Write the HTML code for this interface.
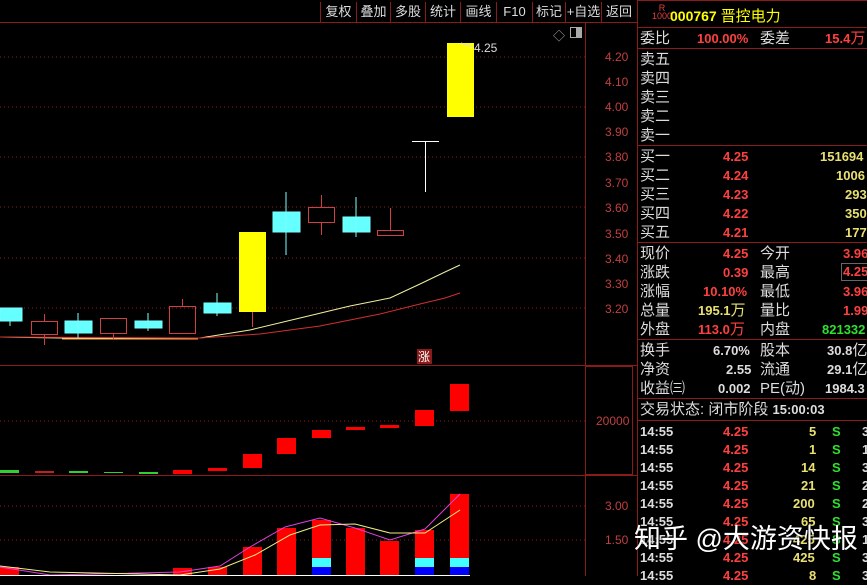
<!DOCTYPE html>
<html><head><meta charset="utf-8"><style>
*{margin:0;padding:0;box-sizing:border-box}
body{width:867px;height:576px;background:#000;overflow:hidden;position:relative;font-family:"Liberation Sans","Noto Sans CJK SC",sans-serif}
.a{position:absolute}
.tb{position:absolute;top:2px;height:20px;color:#ddd;font-size:13px;line-height:20px;text-align:center;border-left:1px solid #8b1a1a}
.r{position:absolute;left:640px;width:227px;height:19px;font-size:15px;line-height:19px;color:#ddd;white-space:nowrap}
.r span{position:absolute}
.red{color:#ff4040}.yel{color:#e8e070}.grn{color:#30e030}.wht{color:#ddd}
.b{font-weight:bold;font-size:13px}
</style></head><body>
<!-- toolbar -->
<div class="a" style="left:0;top:22px;width:637px;height:1px;background:#8b1a1a"></div>
<div class="tb" style="left:320px;width:36px">复权</div>
<div class="tb" style="left:356px;width:34px">叠加</div>
<div class="tb" style="left:390px;width:35px">多股</div>
<div class="tb" style="left:425px;width:35px">统计</div>
<div class="tb" style="left:460px;width:36px">画线</div>
<div class="tb" style="left:496px;width:36px">F10</div>
<div class="tb" style="left:532px;width:33px">标记</div>
<div class="tb" style="left:565px;width:36px">+自选</div>
<div class="tb" style="left:601px;width:35px">返回</div>
<div class="a" style="left:553px;top:27px;color:#aaa;font-size:12px">◇</div>
<div class="a" style="left:570px;top:27px;width:12px;height:11px;border:1px solid #aaa;background:linear-gradient(90deg,#000 50%,#aaa 50%)"></div>
<!-- axis borders -->
<div class="a" style="left:585px;top:22px;width:1px;height:554px;background:#8b1a1a"></div>
<div class="a" style="left:637px;top:0;width:1px;height:576px;background:#8b1a1a"></div>
<div class="a" style="left:0;top:365px;width:637px;height:1px;background:#8b1a1a"></div>
<div class="a" style="left:0;top:475px;width:637px;height:1px;background:#8b1a1a"></div>
<div class="a" style="left:585px;top:366px;width:48px;height:109px;border:1px solid #8b1a1a"></div>
<svg class="a" style="left:0;top:0" width="637" height="576">
<g stroke="#8b2020" stroke-dasharray="1,3">
<line x1="0" y1="57" x2="585" y2="57"/><line x1="0" y1="107" x2="585" y2="107"/><line x1="0" y1="157" x2="585" y2="157"/><line x1="0" y1="207" x2="585" y2="207"/><line x1="0" y1="258" x2="585" y2="258"/><line x1="0" y1="308" x2="585" y2="308"/>
<line x1="0" y1="421" x2="585" y2="421"/><line x1="0" y1="506" x2="585" y2="506"/><line x1="0" y1="540" x2="585" y2="540"/>
</g>
<g fill="#c04040" font-size="12" font-family="Liberation Sans">
<text x="605" y="61">4.20</text><text x="605" y="86">4.10</text><text x="605" y="111">4.00</text><text x="605" y="136">3.90</text><text x="605" y="161">3.80</text><text x="605" y="187">3.70</text><text x="605" y="212">3.60</text><text x="605" y="238">3.50</text><text x="605" y="263">3.40</text><text x="605" y="288">3.30</text><text x="605" y="313">3.20</text>
<text x="596" y="425">20000</text><text x="605" y="510">3.00</text><text x="605" y="544">1.50</text>
</g>
<!-- MA lines -->
<polyline fill="none" stroke="#f0f0a0" stroke-width="1" points="0,337 60,338 200,338 250,330 300,318 350,306 390,298 420,284 445,272 460,265"/>
<polyline fill="none" stroke="#d03030" stroke-width="1" points="0,337 200,338 260,334 320,326 380,314 420,304 445,298 460,293"/>
<line x1="62" y1="339" x2="198" y2="339" stroke="#ffa040"/>
<!-- candles -->
<g stroke="#7ff" fill="#6ff">
<rect x="0" y="308" width="22" height="13"/><line x1="10" y1="321" x2="10" y2="326"/>
<rect x="65" y="321" width="27" height="12"/><line x1="78" y1="313" x2="78" y2="338"/>
<rect x="135" y="321" width="27" height="7"/><line x1="148" y1="313" x2="148" y2="331"/>
<rect x="204" y="303" width="27" height="10"/><line x1="217" y1="293" x2="217" y2="316"/>
<rect x="273" y="212" width="27" height="20"/><line x1="286" y1="192" x2="286" y2="255"/>
<rect x="343" y="217" width="27" height="15"/><line x1="356" y1="197" x2="356" y2="237"/>
</g>
<g stroke="#d04040" fill="none">
<rect x="31.5" y="321.5" width="26" height="13"/><line x1="44.5" y1="314" x2="44.5" y2="321"/><line x1="44.5" y1="335" x2="44.5" y2="345"/>
<rect x="100.5" y="318.5" width="26" height="15"/><line x1="113.5" y1="334" x2="113.5" y2="339"/>
<rect x="169.5" y="306.5" width="26" height="27"/><line x1="182.5" y1="299" x2="182.5" y2="306"/>
<rect x="308.5" y="207.5" width="26" height="15"/><line x1="321.5" y1="195" x2="321.5" y2="207"/><line x1="321.5" y1="223" x2="321.5" y2="235"/>
<rect x="377.5" y="230.5" width="26" height="5"/><line x1="390.5" y1="208" x2="390.5" y2="230"/>
</g>
<rect x="239" y="232" width="27" height="80" fill="#ff0"/><line x1="252.5" y1="312" x2="252.5" y2="327" stroke="#d04040"/>
<line x1="412" y1="141.5" x2="439" y2="141.5" stroke="#fff"/><line x1="425.5" y1="141" x2="425.5" y2="192" stroke="#fff"/>
<rect x="447" y="43" width="27" height="74" fill="#ff0"/>
<line x1="461" y1="43" x2="473" y2="47" stroke="#ddd"/>
<text x="474" y="52" fill="#ddd" font-size="12" font-family="Liberation Sans">4.25</text>
<rect x="417" y="349" width="15" height="15" fill="#8b1a1a"/><text x="418" y="361" fill="#fff" font-size="12" font-family="Noto Sans CJK SC">涨</text>
<!-- volume -->
<g fill="#30d030"><rect x="0" y="470" width="19" height="3"/><rect x="69" y="471" width="19" height="2"/><rect x="104" y="472" width="19" height="1"/><rect x="139" y="472" width="19" height="2"/></g>
<g fill="#f00"><rect x="35" y="471" width="19" height="2" fill="#c02020"/><rect x="173" y="470" width="19" height="4"/><rect x="208" y="468" width="19" height="3"/>
<rect x="243" y="454" width="19" height="14"/><rect x="277" y="438" width="19" height="16"/><rect x="312" y="430" width="19" height="8"/><rect x="346" y="427" width="19" height="3"/><rect x="380" y="425" width="19" height="3"/><rect x="415" y="410" width="19" height="16"/><rect x="450" y="384" width="19" height="27"/></g>
<!-- bottom -->
<g fill="#f00"><rect x="0" y="567" width="19" height="9"/><rect x="173" y="568" width="19" height="8"/><rect x="208" y="567" width="19" height="9"/>
<rect x="243" y="547" width="19" height="29"/><rect x="277" y="528" width="19" height="48"/><rect x="312" y="520" width="19" height="56"/><rect x="346" y="528" width="19" height="48"/><rect x="380" y="541" width="19" height="35"/><rect x="415" y="530" width="19" height="46"/><rect x="450" y="494" width="19" height="82"/></g>
<g><rect x="312" y="558" width="19" height="9" fill="#4ff"/><rect x="312" y="567" width="19" height="9" fill="#00f"/><rect x="415" y="558" width="19" height="9" fill="#4ff"/><rect x="415" y="567" width="19" height="9" fill="#00f"/><rect x="450" y="558" width="19" height="9" fill="#4ff"/><rect x="450" y="567" width="19" height="9" fill="#00f"/></g>
<polyline fill="none" stroke="#e040e0" points="0,567 50,575 180,572 220,566 250,547 285,527 320,518 355,528 390,540 425,529 460,494"/>
<polyline fill="none" stroke="#f0f080" points="0,566 50,572 180,575 220,569 255,555 290,535 320,525 355,524 390,533 425,533 460,510"/>
<line x1="0" y1="575.5" x2="470" y2="575.5" stroke="#fff"/>
</svg>
<!-- right panel -->
<div class="a" style="left:637px;top:0;width:230px;height:1px;background:#8b1a1a"></div>
<div class="a" style="left:652px;top:4px;color:#e04040;font-size:9px;line-height:8px;text-align:center">R<br>1000</div>
<div class="a" style="left:670px;top:5px;color:#ff0;font-size:14px;font-weight:bold">000767 <span style="font-weight:normal;font-size:15px">晋控电力</span></div>
<div class="a" style="left:637px;top:27px;width:230px;height:1px;background:#8b1a1a"></div>
<div class="r" style="top:29px"><span>委比</span><span class="red b" style="left:57px">100.00%</span><span style="left:120px">委差</span><span class="red b" style="left:185px">15.4<span style="position:static;font-weight:normal;font-size:15px">万</span></span></div>
<div class="a" style="left:637px;top:48px;width:230px;height:1px;background:#8b1a1a"></div>
<div class="r" style="top:50px">卖五</div><div class="r" style="top:69px">卖四</div><div class="r" style="top:88px">卖三</div><div class="r" style="top:107px">卖二</div><div class="r" style="top:126px">卖一</div>
<div class="a" style="left:637px;top:145px;width:230px;height:1px;background:#8b1a1a"></div>
<div class="r" style="top:147px"><span>买一</span><span class="red b" style="left:83px">4.25</span><span class="yel b" style="left:180px">151694</span></div>
<div class="r" style="top:166px"><span>买二</span><span class="red b" style="left:83px">4.24</span><span class="yel b" style="left:196px">1006</span></div>
<div class="r" style="top:185px"><span>买三</span><span class="red b" style="left:83px">4.23</span><span class="yel b" style="left:205px">293</span></div>
<div class="r" style="top:204px"><span>买四</span><span class="red b" style="left:83px">4.22</span><span class="yel b" style="left:205px">350</span></div>
<div class="r" style="top:223px"><span>买五</span><span class="red b" style="left:83px">4.21</span><span class="yel b" style="left:205px">177</span></div>
<div class="a" style="left:637px;top:242px;width:230px;height:1px;background:#8b1a1a"></div>
<div class="r" style="top:244px"><span>现价</span><span class="red b" style="left:83px">4.25</span><span style="left:120px">今开</span><span class="red b" style="left:203px">3.96</span></div>
<div class="r" style="top:263px"><span>涨跌</span><span class="red b" style="left:83px">0.39</span><span style="left:120px">最高</span><span class="red b" style="left:201px;border:1px solid #666;padding:0 1px;line-height:16px">4.25</span></div>
<div class="r" style="top:282px"><span>涨幅</span><span class="red b" style="left:63px">10.10%</span><span style="left:120px">最低</span><span class="red b" style="left:203px">3.96</span></div>
<div class="r" style="top:301px"><span>总量</span><span class="yel b" style="left:58px">195.1<span style="position:static;font-weight:normal;font-size:15px">万</span></span><span style="left:120px">量比</span><span class="red b" style="left:203px">1.99</span></div>
<div class="r" style="top:320px"><span>外盘</span><span class="red b" style="left:58px">113.0<span style="position:static;font-weight:normal;font-size:15px">万</span></span><span style="left:120px">内盘</span><span class="grn b" style="left:182px">821332</span></div>
<div class="a" style="left:637px;top:339px;width:230px;height:1px;background:#8b1a1a"></div>
<div class="r" style="top:341px"><span>换手</span><span class="wht b" style="left:73px">6.70%</span><span style="left:120px">股本</span><span class="wht b" style="left:187px">30.8<span style="position:static;font-weight:normal;font-size:15px">亿</span></span></div>
<div class="r" style="top:360px"><span>净资</span><span class="wht b" style="left:86px">2.55</span><span style="left:120px">流通</span><span class="wht b" style="left:187px">29.1<span style="position:static;font-weight:normal;font-size:15px">亿</span></span></div>
<div class="r" style="top:379px"><span>收益㈢</span><span class="wht b" style="left:78px">0.002</span><span style="left:120px">PE(动)</span><span class="wht b" style="left:185px">1984.3</span></div>
<div class="a" style="left:637px;top:398px;width:230px;height:1px;background:#8b1a1a"></div>
<div class="r" style="top:400px">交易状态: 闭市阶段 <b style="font-size:13px">15:00:03</b></div>
<div class="a" style="left:637px;top:420px;width:230px;height:1px;background:#8b1a1a"></div>
<div class="r" style="top:422px"><span class="b">14:55</span><span class="red b" style="left:83px">4.25</span><span class="yel b" style="left:169px">5</span><span class="grn b" style="left:192px">S</span><span class="b" style="left:222px">3</span></div>
<div class="r" style="top:440px"><span class="b">14:55</span><span class="red b" style="left:83px">4.25</span><span class="yel b" style="left:169px">1</span><span class="grn b" style="left:192px">S</span><span class="b" style="left:222px">1</span></div>
<div class="r" style="top:458px"><span class="b">14:55</span><span class="red b" style="left:83px">4.25</span><span class="yel b" style="left:161px">14</span><span class="grn b" style="left:192px">S</span><span class="b" style="left:222px">3</span></div>
<div class="r" style="top:476px"><span class="b">14:55</span><span class="red b" style="left:83px">4.25</span><span class="yel b" style="left:161px">21</span><span class="grn b" style="left:192px">S</span><span class="b" style="left:222px">2</span></div>
<div class="r" style="top:494px"><span class="b">14:55</span><span class="red b" style="left:83px">4.25</span><span class="yel b" style="left:153px">200</span><span class="grn b" style="left:192px">S</span><span class="b" style="left:222px">2</span></div>
<div class="r" style="top:512px"><span class="b">14:55</span><span class="red b" style="left:83px">4.25</span><span class="yel b" style="left:161px">65</span><span class="grn b" style="left:192px">S</span><span class="b" style="left:222px">3</span></div>
<div class="r" style="top:530px"><span class="b">14:55</span><span class="red b" style="left:83px">4.25</span><span class="yel b" style="left:153px">425</span><span class="grn b" style="left:192px">S</span><span class="b" style="left:222px">1</span></div>
<div class="r" style="top:548px"><span class="b">14:55</span><span class="red b" style="left:83px">4.25</span><span class="yel b" style="left:153px">425</span><span class="grn b" style="left:192px">S</span><span class="b" style="left:222px">3</span></div>
<div class="r" style="top:566px"><span class="b">14:55</span><span class="red b" style="left:83px">4.25</span><span class="yel b" style="left:169px">8</span><span class="grn b" style="left:192px">S</span><span class="b" style="left:222px">3</span></div>
<div class="a" style="left:634px;top:522px;color:#fff;font-size:27px;line-height:34px;white-space:nowrap;text-shadow:0 0 2px #000">知乎 @大游资快报</div>
</body></html>
